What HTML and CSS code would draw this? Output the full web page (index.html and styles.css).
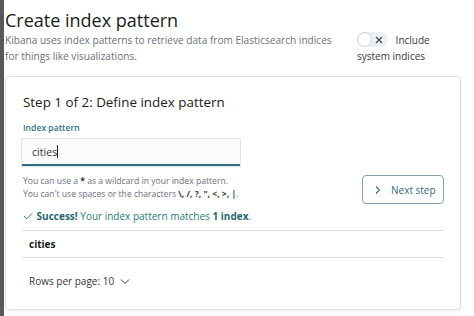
FILE: index.html
```html
<!DOCTYPE html>
<html lang="en">

<head>
    <meta charset="UTF-8">
    <meta name="viewport" content="width=device-width, initial-scale=1.0">
    <title>Create index pattern</title>
    <link rel="stylesheet" href="styles.css">
</head>

<body>

    <div class="page">
        <div class="header">
            <div class="intro">
                <h1>Create index pattern</h1>
                <p class="lead">Kibana uses index patterns to retrieve data from Elasticsearch indices
                    <br>for things like visualizations.</p>
            </div>
            <div class="include">
                <span class="toggle">
                    <span class="knob"></span>
                    <svg class="cross" width="8" height="8" viewBox="0 0 8 8"><path d="M1 1 L7 7 M7 1 L1 7" stroke="currentColor" stroke-width="1.1"/></svg>
                </span>
                <span class="include-label">Include</span>
                <br>system indices
            </div>
        </div>

        <div class="panel">
            <h2>Step 1 of 2: Define index pattern</h2>

            <div class="form-row">
                <div class="field">
                    <label class="field-label">Index pattern</label>
                    <div class="input">cities<span class="caret"></span></div>
                    <p class="help">You can use a <b>*</b> as a wildcard in your index pattern.
                        <br>You can't use spaces or the characters <b>\, /, ?, ", &lt;, &gt;, |</b>.</p>
                </div>
                <button class="next">
                    <svg width="8" height="10" viewBox="0 0 8 10"><path d="M2 1.5 L5.5 5 L2 8.5" fill="none" stroke="currentColor" stroke-width="1.1"/></svg>
                    Next step
                </button>
            </div>

            <p class="success"><svg class="check" width="10" height="8" viewBox="0 0 10 8"><path d="M1 4 L3.8 6.8 L9 1.5" fill="none" stroke="currentColor" stroke-width="1"/></svg> <b>Success!</b> Your index pattern matches <b>1 index</b>.</p>

            <div class="match">cities</div>

            <div class="rows">
                Rows per page: 10
                <svg width="10" height="7" viewBox="0 0 10 7"><path d="M1 1.5 L5 5.5 L9 1.5" fill="none" stroke="currentColor" stroke-width="1"/></svg>
            </div>
        </div>
    </div>

</body>

</html>
```

FILE: styles.css
```css
html {
    font-family: "Open Sans", sans-serif;
}

body {
    margin: 0;
    height: 316px;
    background-color: white;
    border-left: 4px solid rgb(88, 88, 90);
    box-sizing: border-box;
    overflow: hidden;
}

.page {
    padding: 8px 13px 0px 1px;
}

.header {
    display: flex;
    justify-content: space-between;
}

h1 {
    margin: 0;
    font-size: 18px;
    font-weight: 400;
    line-height: 24px;
    color: rgb(26, 28, 33);
}

.lead {
    margin: 0;
    font-size: 10.1px;
    line-height: 16px;
    color: rgb(105, 112, 125);
}

.include {
    width: 104px;
    margin-top: 24px;
    font-size: 10px;
    line-height: 16px;
    color: rgb(52, 55, 65);
}

.toggle {
    display: inline-flex;
    align-items: center;
    justify-content: space-between;
    width: 31px;
    height: 15px;
    margin-right: 5px;
    vertical-align: -3px;
    border-radius: 8px;
    background-color: rgb(236, 239, 243);
    box-sizing: border-box;
}

.knob {
    width: 15px;
    height: 15px;
    border-radius: 50%;
    background-color: white;
    border: 1px solid rgb(205, 210, 218);
    box-sizing: border-box;
}

.cross {
    margin-right: 5px;
    color: rgb(60, 64, 74);
}

.panel {
    margin-top: 12px;
    border: 1px solid rgb(220, 224, 230);
    border-radius: 4px;
    box-shadow: 0 1px 3px rgba(0, 0, 0, 0.08);
    padding: 16px 16px 0px 17px;
    height: 234px;
    box-sizing: border-box;
}

h2 {
    margin: 0;
    font-size: 13.4px;
    font-weight: 400;
    line-height: 18px;
    color: rgb(26, 28, 33);
}

.form-row {
    display: flex;
    justify-content: space-between;
    align-items: flex-start;
    margin-top: 11px;
}

.field-label {
    display: block;
    font-size: 8.6px;
    font-weight: 600;
    line-height: 12px;
    color: rgb(46, 113, 132);
}

.input {
    width: 218px;
    height: 27px;
    margin-top: 5px;
    margin-left: -1px;
    padding-left: 10px;
    font-size: 10.6px;
    line-height: 26px;
    color: rgb(52, 55, 65);
    background-color: rgb(251, 252, 253);
    box-shadow: 0 0 0 1px rgb(225, 229, 235), 0 1px 2px rgba(0, 0, 0, 0.06);
    border-bottom: 2px solid rgb(46, 110, 130);
    box-sizing: border-box;
}

.caret {
    display: inline-block;
    width: 1px;
    height: 13px;
    vertical-align: -2px;
    background-color: rgb(26, 28, 33);
}

.help {
    margin: 9px 0 0 0;
    font-size: 8.6px;
    line-height: 13px;
    color: rgb(105, 112, 125);
}

.help b {
    color: rgb(52, 55, 65);
}

.next {
    display: flex;
    align-items: center;
    gap: 9px;
    width: 82px;
    height: 29px;
    margin-top: 53px;
    padding: 0 0 0 11px;
    font-family: "Open Sans", sans-serif;
    font-size: 10px;
    color: rgb(46, 110, 124);
    background-color: white;
    border: 1px solid rgb(132, 160, 170);
    border-radius: 4px;
}

.success {
    margin: 5px 0 0 0;
    padding-bottom: 6px;
    font-size: 10px;
    line-height: 15px;
    color: rgb(40, 124, 120);
    border-bottom: 1px solid rgb(220, 224, 230);
}

.success b {
    color: rgb(30, 104, 110);
}

.check {
    margin-right: 1px;
    vertical-align: 0px;
}

.match {
    padding: 6px 0 6px 6px;
    font-size: 10px;
    font-weight: 700;
    line-height: 14px;
    color: rgb(26, 28, 33);
    border-bottom: 1px solid rgb(220, 224, 230);
}

.rows {
    display: flex;
    align-items: center;
    gap: 6px;
    margin-top: 16px;
    padding-left: 6px;
    font-size: 10px;
    line-height: 15px;
    color: rgb(52, 55, 65);
}
```
